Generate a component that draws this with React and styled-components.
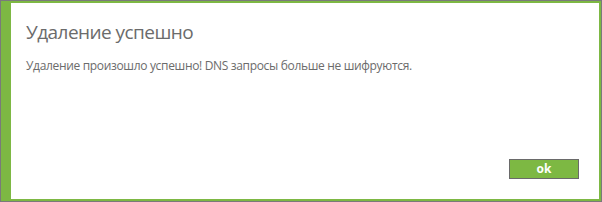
import React from "react";
import styled, { createGlobalStyle } from "styled-components";

const Global = createGlobalStyle`
  html, body { margin: 0; padding: 0; background: #fff; }
  body { font-family: "Open Sans", "Noto Sans", sans-serif; }
`;

const Frame = styled.div`
  box-sizing: border-box;
  width: 602px;
  height: 202px;
  border: 1px solid #7a7a7a;
  background: #7db843;
  padding: 2px 2px 2px 10px;
  display: flex;
`;

const Panel = styled.div`
  flex: 1;
  background: #fff;
  display: flex;
  flex-direction: column;
  padding: 16px 20px 20px 15px;
`;

const Title = styled.h1`
  margin: 0;
  font-family: "Open Sans", sans-serif;
  font-weight: 400;
  font-size: 19px;
  letter-spacing: -0.55px;
  line-height: 27px;
  color: #6b6b6b;
`;

const Message = styled.p`
  margin: 12px 0 0;
  font-family: "Open Sans", sans-serif;
  font-size: 12px;
  letter-spacing: -0.33px;
  line-height: 16px;
  color: #6b6b6b;
`;

const Footer = styled.div`
  margin-top: auto;
  display: flex;
  justify-content: flex-end;
`;

const Button = styled.button`
  box-sizing: border-box;
  width: 70px;
  height: 20px;
  border: 1px solid #6a6a6a;
  background: #7db843;
  color: #fff;
  font-family: "Open Sans", sans-serif;
  font-weight: 700;
  font-size: 12px;
  line-height: 16px;
  padding: 0;
  cursor: pointer;
`;

export default function App() {
  return (
    <>
      <Global />
      <Frame>
        <Panel>
          <Title>Удаление успешно</Title>
          <Message>
            Удаление произошло успешно! DNS запросы больше не шифруются.
          </Message>
          <Footer>
            <Button>ok</Button>
          </Footer>
        </Panel>
      </Frame>
    </>
  );
}
